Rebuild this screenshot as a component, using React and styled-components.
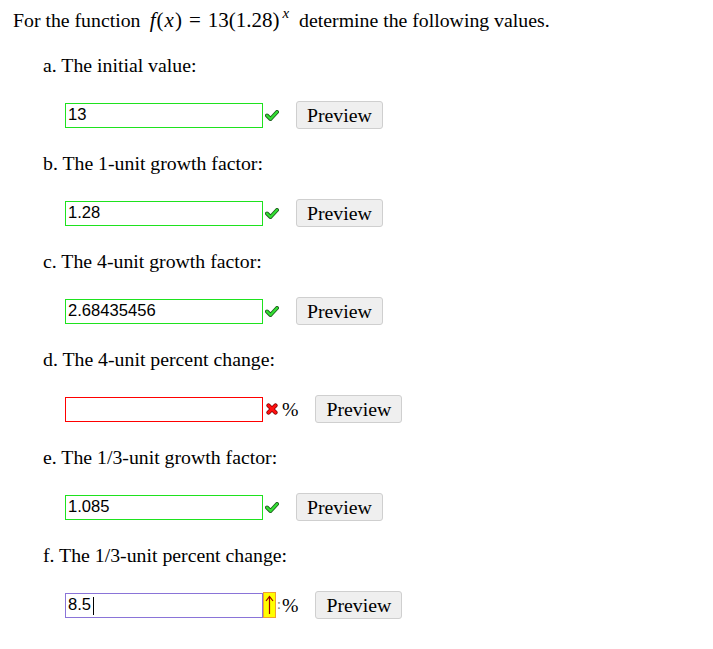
import React from 'react';
import styled, {createGlobalStyle} from 'styled-components';

const GlobalStyle = createGlobalStyle`
    body {
        margin: 0;
        background: #ffffff;
        font-family: "Liberation Serif", "Times New Roman", serif;
        font-size: 19.8px;
        color: #000;
    }
`;

const Page = styled.div`
    padding: 9px 13px;
`;

const Title = styled.div`
    line-height: 22px;
    white-space: nowrap;
`;

const MathExpr = styled.span`
    font-size: 21px;
    margin: 0 3px 0 3px;
`;

const MathVar = styled.span`
    font-style: italic;
    margin: 0 ${p => p.$pad || 0}px;
`;

const MathOp = styled.span`
    margin: 0 7px;
`;

const Sup = styled.sup`
    font-size: 15px;
    font-style: italic;
    line-height: 0;
    vertical-align: 9px;
    margin: 0 2px 0 3px;
`;

const List = styled.div`
    margin-top: 23px;
    padding-left: 30px;
`;

const Item = styled.div`
    & + & {
        margin-top: 23px;
    }
`;

const Label = styled.div`
    line-height: 22px;
`;

const Row = styled.div`
    display: flex;
    align-items: center;
    height: 28px;
    margin-top: 25px;
    padding-left: 22px;
`;

const Field = styled.div`
    position: relative;
    display: flex;
`;

const Input = styled.input`
    box-sizing: border-box;
    width: 198px;
    height: 25px;
    margin: 0;
    padding: 0 2px;
    font-family: "Liberation Sans", Arial, sans-serif;
    font-size: 16.6px;
    color: #000;
    outline: none;
    border: 1px solid ${p => p.$state === 'ok' ? '#1ee21e' : p.$state === 'bad' ? '#ff0000' : '#8a74d8'};
    background: #fff;
`;

const Caret = styled.span`
    position: absolute;
    left: 28px;
    top: 4px;
    width: 1px;
    height: 18px;
    background: #000;
`;

const Mark = styled.span`
    display: inline-flex;
    align-items: center;
    justify-content: center;
    width: 14px;
    margin-left: 2px;
`;

const Warn = styled.span`
    box-sizing: border-box;
    display: inline-flex;
    align-items: center;
    justify-content: center;
    width: 13px;
    height: 26px;
    background: #ffff00;
    border: 1px solid #f0a030;
`;

const Colon = styled.span`
    color: #777;
    font-size: 14px;
    margin-left: 1px;
`;

const Unit = styled.span`
    margin-left: ${p => p.$tight ? '1px' : '3px'};
`;

const Button = styled.button`
    box-sizing: border-box;
    height: 28px;
    margin-left: 17px;
    padding: 0 10px;
    font-family: "Liberation Serif", "Times New Roman", serif;
    font-size: 19.8px;
    color: #000;
    background: #efefef;
    border: 1px solid #cfcfcf;
    border-radius: 3px;
`;

const Check = () => (
    <svg width="14" height="11" viewBox="0 0 14 11">
        <path d="M2 5.5 L5.5 9 L12 2" fill="none" stroke="#1f5f1f" strokeWidth="4" strokeLinecap="round" strokeLinejoin="round"/>
        <path d="M2 5.5 L5.5 9 L12 2" fill="none" stroke="#33e033" strokeWidth="2.2" strokeLinecap="round" strokeLinejoin="round"/>
    </svg>
);

const Cross = () => (
    <svg width="12" height="12" viewBox="0 0 12 12">
        <path d="M2.5 2.5 L9.5 9.5 M9.5 2.5 L2.5 9.5" fill="none" stroke="#7a0000" strokeWidth="4.2" strokeLinecap="round"/>
        <path d="M2.5 2.5 L9.5 9.5 M9.5 2.5 L2.5 9.5" fill="none" stroke="#ff1010" strokeWidth="2.8" strokeLinecap="round"/>
    </svg>
);

const UpArrow = () => (
    <svg width="9" height="20" viewBox="0 0 9 20">
        <path d="M4.5 19 L4.5 2 M1 6 L4.5 1.5 L8 6" fill="none" stroke="#a00000" strokeWidth="1.2"/>
    </svg>
);

const items = [
    {label: 'a. The initial value:', value: '13', state: 'ok'},
    {label: 'b. The 1-unit growth factor:', value: '1.28', state: 'ok'},
    {label: 'c. The 4-unit growth factor:', value: '2.68435456', state: 'ok'},
    {label: 'd. The 4-unit percent change:', value: '', state: 'bad', unit: true},
    {label: 'e. The 1/3-unit growth factor:', value: '1.085', state: 'ok'},
    {label: 'f. The 1/3-unit percent change:', value: '8.5', state: 'focus', unit: true},
];

export default function App() {
    return (
        <Page>
            <GlobalStyle/>
            <Title>
                For the function
                <MathExpr>
                    {' '}<MathVar $pad={1}>f</MathVar>(<MathVar $pad={1}>x</MathVar>)
                    <MathOp>=</MathOp>13(1.28)<Sup>x</Sup>
                </MathExpr>
                {' '}determine the following values.
            </Title>
            <List>
                {items.map(item => (
                    <Item key={item.label}>
                        <Label>{item.label}</Label>
                        <Row>
                            <Field>
                                <Input $state={item.state} defaultValue={item.value} readOnly/>
                                {item.state === 'focus' && <Caret/>}
                            </Field>
                            {item.state === 'ok' && <Mark><Check/></Mark>}
                            {item.state === 'bad' && <Mark><Cross/></Mark>}
                            {item.state === 'focus' && <><Warn><UpArrow/></Warn><Colon>:</Colon></>}
                            {item.unit && <Unit $tight={item.state === 'focus'}>%</Unit>}
                            <Button>Preview</Button>
                        </Row>
                    </Item>
                ))}
            </List>
        </Page>
    );
}
